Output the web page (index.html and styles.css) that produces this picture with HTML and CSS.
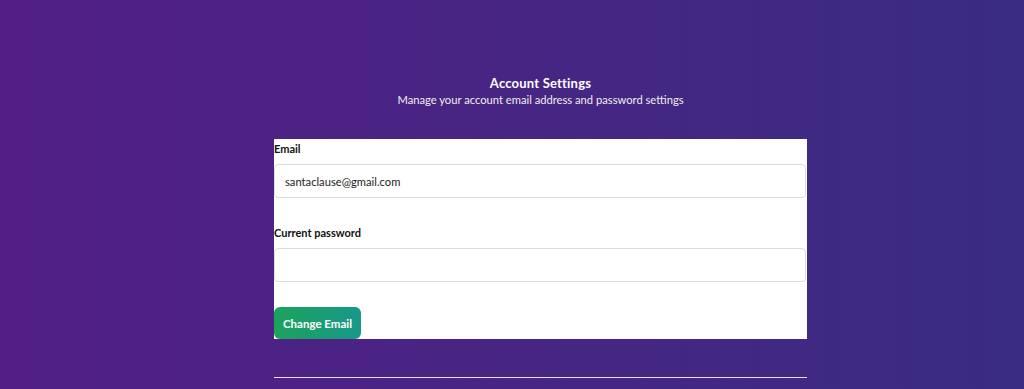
FILE: index.html
```html
<!DOCTYPE html>
<html>
<head>
<meta charset="utf-8">
<link rel="stylesheet" href="styles.css">
</head>
<body>
<main class="page">
  <div class="wrap">
    <header class="head">
      <h1 class="title">Account Settings</h1>
      <p class="subtitle">Manage your account email address and password settings</p>
    </header>
    <form class="card">
      <label class="label" for="email">Email</label>
      <input class="input" id="email" type="text" value="santaclause@gmail.com">
      <label class="label label-gap" for="pw">Current password</label>
      <input class="input" id="pw" type="password">
      <button class="btn" type="button">Change Email</button>
    </form>
    <hr class="rule">
  </div>
</main>
</body>
</html>
```
FILE: styles.css
```css
html, body {
  margin: 0;
  padding: 0;
  height: 100%;
}
body {
  background: linear-gradient(90deg, #521f86 0%, #472583 50%, #392c81 100%);
  font-family: Lato, "Open Sans", sans-serif;
  overflow: hidden;
}
.page {
  display: flex;
  justify-content: center;
  padding-left: 57px;
}
.wrap {
  width: 533px;
  padding-top: 74px;
  display: flex;
  flex-direction: column;
}
.head {
  text-align: center;
  color: #fff;
}
.title {
  margin: 0;
  font-size: 13px;
  font-weight: 700;
  line-height: 18px;
  letter-spacing: 0.2px;
}
.subtitle {
  margin: 0;
  font-size: 11.2px;
  line-height: 16px;
  color: #eee;
}
.card {
  margin-top: 31px;
  background: #fff;
  display: flex;
  flex-direction: column;
  align-items: flex-start;
  height: 200px;
  box-sizing: border-box;
}
.label {
  font-size: 11px;
  font-weight: 700;
  color: #111;
  line-height: 14px;
  margin-top: 3px;
}
.label-gap {
  margin-top: 28px;
}
.input {
  margin-top: 8px;
  width: 532px;
  height: 34px;
  box-sizing: border-box;
  border: 1px solid #dcdcdc;
  border-radius: 4px;
  padding: 0 10px;
  font-family: Lato, "Open Sans", sans-serif;
  font-size: 11.2px;
  color: #222;
  background: #fff;
  outline: none;
}
.btn {
  margin-top: auto;
  height: 32px;
  padding: 0 9px;
  border: none;
  border-radius: 6px;
  background: linear-gradient(90deg, #1da25c 0%, #18988a 100%);
  color: #fff;
  font-family: Lato, sans-serif;
  font-weight: 700;
  font-size: 11.5px;
}
.rule {
  margin: 38px 0 0;
  border: none;
  border-top: 1px solid #e6e0f0;
  height: 0;
}
```
